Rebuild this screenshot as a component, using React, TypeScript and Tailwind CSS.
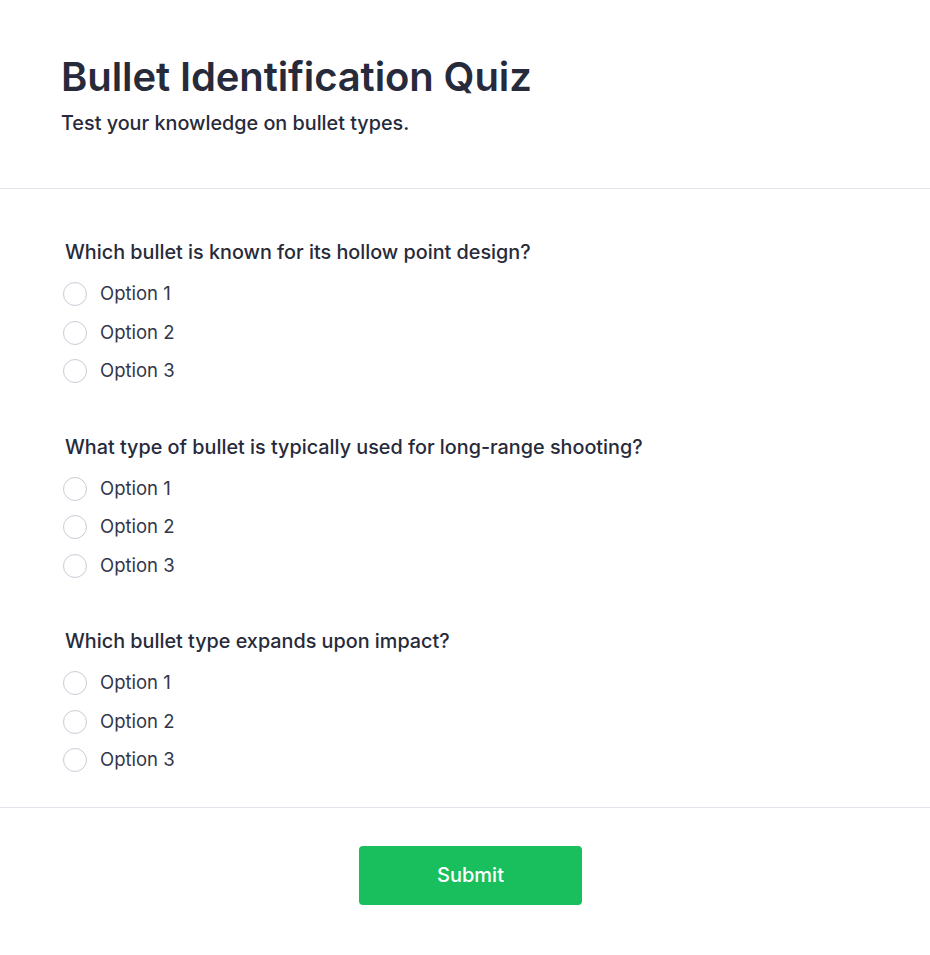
const QUESTIONS = [
    'Which bullet is known for its hollow point design?',
    'What type of bullet is typically used for long-range shooting?',
    'Which bullet type expands upon impact?',
];

const OPTIONS = ['Option 1', 'Option 2', 'Option 3'];

export default function App(): JSX.Element {
    return (
        <div className="min-h-screen bg-white text-[#272a3a]" style={{ fontFamily: 'Inter, "Noto Sans", sans-serif' }}>
            <header className="border-b border-[#e2e3ea] px-[61px] pb-[51px] pt-[53px]">
                <h1 className="text-[40px] font-semibold leading-[48px] tracking-[-0.1px]">Bullet Identification Quiz</h1>
                <p className="mt-[8px] text-[19.8px] font-medium leading-[28px]">Test your knowledge on bullet types.</p>
            </header>

            <main className="flex flex-col gap-[47.5px] border-b border-[#e2e3ea] px-[63px] pb-[32.5px] pt-[49px]">
                {QUESTIONS.map((question, qi) => (
                    <fieldset key={qi}>
                        <legend className="ml-[2px] text-[19.8px] font-medium leading-[28px]">{question}</legend>
                        <div className="mt-[14px] flex flex-col gap-[10.5px]">
                            {OPTIONS.map((option) => (
                                <label key={option} className="flex h-[28px] items-center gap-[13px] text-[18.5px] text-[#33364a]">
                                    <input
                                        type="radio"
                                        name={`q${qi}`}
                                        className="h-[24px] w-[24px] appearance-none rounded-full border border-[#c9ccd6] bg-white"
                                    />
                                    {option}
                                </label>
                            ))}
                        </div>
                    </fieldset>
                ))}
            </main>

            <footer className="flex justify-center pb-[50px] pl-[11px] pt-[38px]">
                <button
                    type="button"
                    className="h-[59px] w-[223px] rounded-[4px] bg-[#19be5d] text-[20px] font-medium text-white"
                >
                    Submit
                </button>
            </footer>
        </div>
    );
}
